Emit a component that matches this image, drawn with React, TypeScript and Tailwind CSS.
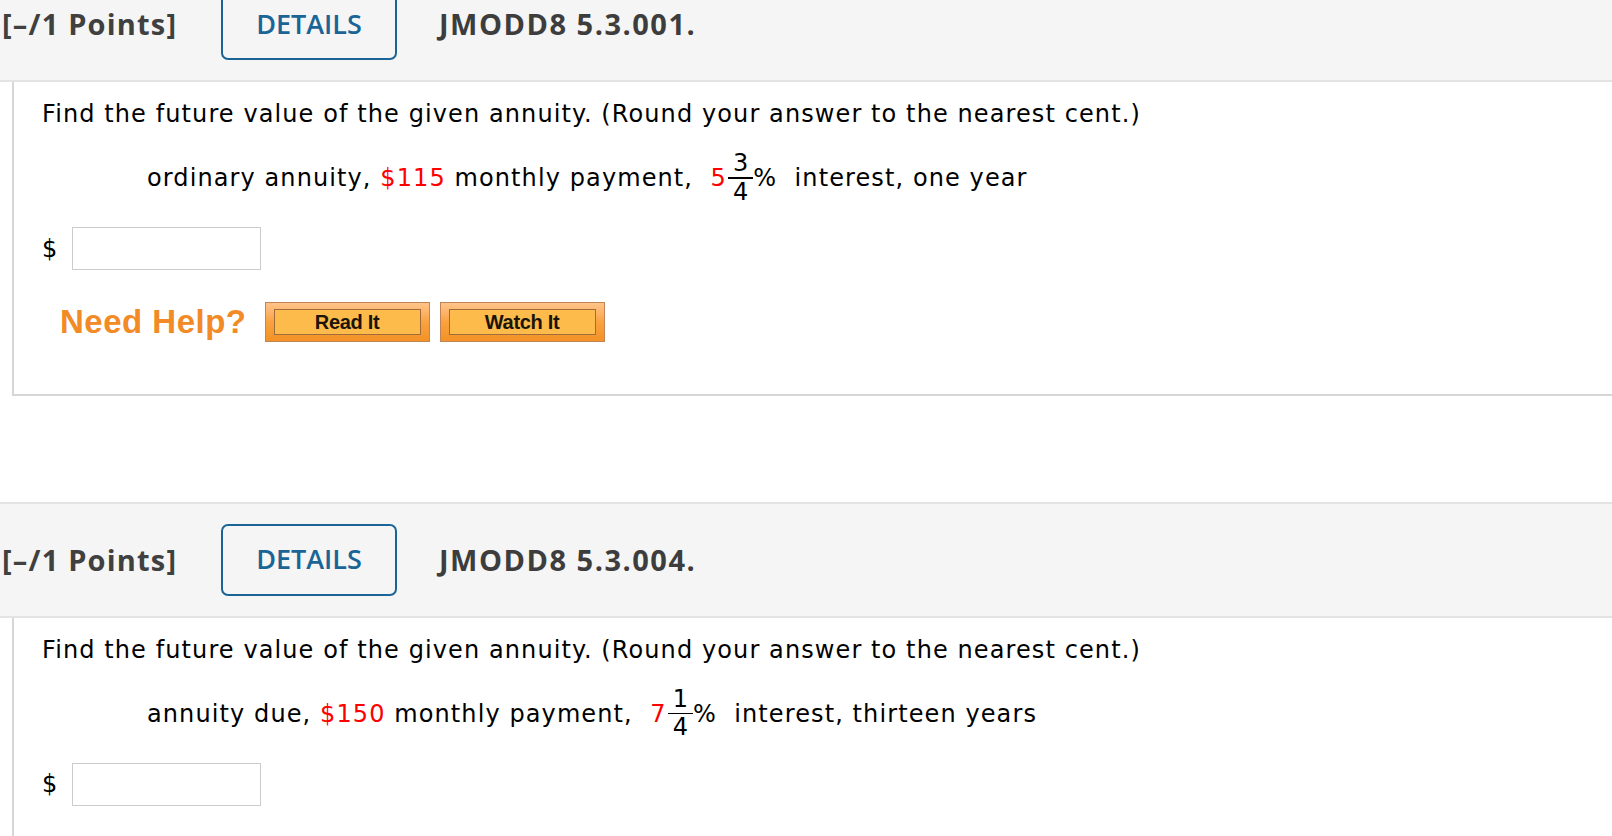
import React from 'react';

const bodyFont = { fontFamily: '"DejaVu Sans", Verdana, sans-serif' };
const headFont = { fontFamily: '"Open Sans", "Noto Sans", sans-serif' };
const arial = { fontFamily: '"Liberation Sans", Arial, sans-serif' };

type QuestionProps = {
  code: string;
  lead: string;
  payment: string;
  whole: string;
  num: string;
  tail: string;
  className?: string;
};

function HelpButton({ label }: { label: string }) {
  return (
    <div className="flex h-[40px] w-[165px] items-center justify-center border border-[#c08456] bg-gradient-to-b from-[#ffc48a] via-[#f9a23e] to-[#f39226] px-[8px] py-[6px]">
      <div
        className="flex h-full w-full items-center justify-center border border-[#a06c3a] bg-[#fdbb4c] text-[20px] font-bold tracking-[-0.3px] text-[#1b1408]"
        style={arial}
      >
        {label}
      </div>
    </div>
  );
}

function Question({ code, lead, payment, whole, num, tail, className }: QuestionProps) {
  return (
    <section className={className}>
      <header
        className="flex h-[116px] items-center border-y-2 border-[#e3e3e3] bg-[#f5f5f5] text-[#404040]"
        style={headFont}
      >
        <span className="w-[221px] pl-[2px] text-[29px] font-bold tracking-[1.2px]">[–/1 Points]</span>
        <button
          type="button"
          className="flex h-[72px] w-[176px] items-center justify-center rounded-[7px] border-2 border-[#1a6496] text-[27px] font-semibold text-[#1a6496]"
        >
          DETAILS
        </button>
        <span className="ml-[42px] text-[29px] font-bold tracking-[1.5px] text-[#3d3d3d]">{code}</span>
      </header>
      <div
        className="ml-[12px] border-b-2 border-l-2 border-[#d6d6d6] pb-[47px] pl-[28px] pt-[17px] text-black"
        style={bodyFont}
      >
        <p className="text-[24px] leading-[30px] tracking-[1.1px]">
          Find the future value of the given annuity. (Round your answer to the nearest cent.)
        </p>
        <div className="mt-[21px] flex h-[56px] items-center pl-[105px] text-[24px] tracking-[1.1px]">
          <span className="whitespace-pre">{lead}</span>
          <span className="text-[#ff0000]">{payment}</span>
          <span className="whitespace-pre"> monthly payment,  </span>
          <span className="text-[#ff0000]">{whole}</span>
          <span className="ml-[1px] flex flex-col items-center leading-[27px] tracking-normal">
            <span className="px-[5px]">{num}</span>
            <span className="h-[1.5px] w-full bg-black" />
            <span className="px-[5px]">4</span>
          </span>
          <span className="whitespace-pre">%  {tail}</span>
        </div>
        <div className="mt-[21px] flex items-center">
          <span className="w-[30px] text-[24px]">$</span>
          <div className="h-[43px] w-[189px] border border-[#cccccc] bg-white" />
        </div>
        <div className="mt-[27px] flex items-center pl-[18px]">
          <span className="mr-[18px] text-[33px] font-bold tracking-[0.5px] text-[#f28a26]" style={arial}>
            Need Help?
          </span>
          <HelpButton label="Read It" />
          <div className="w-[10px]" />
          <HelpButton label="Watch It" />
        </div>
      </div>
    </section>
  );
}

export default function App() {
  return (
    <div className="h-[836px] w-full overflow-hidden bg-white">
      <div className="-mt-[34px]">
        <Question
          code="JMODD8 5.3.001."
          lead="ordinary annuity, "
          payment="$115"
          whole="5"
          num="3"
          tail="interest, one year"
        />
        <Question
          className="mt-[106px]"
          code="JMODD8 5.3.004."
          lead="annuity due, "
          payment="$150"
          whole="7"
          num="1"
          tail="interest, thirteen years"
        />
      </div>
    </div>
  );
}
